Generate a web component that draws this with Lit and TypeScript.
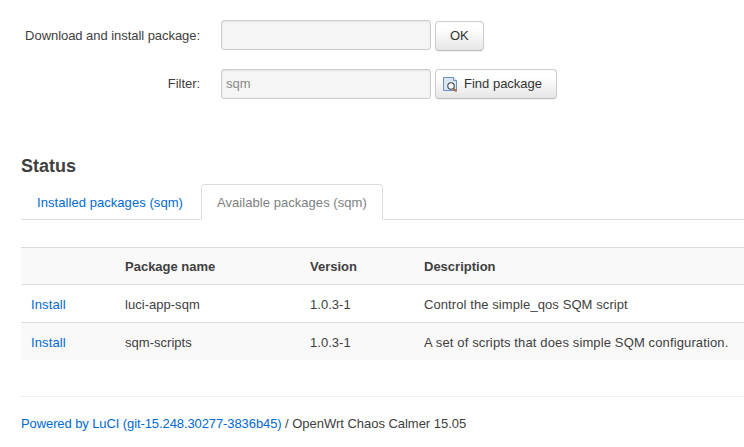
import { LitElement, html, css } from "lit";
import { customElement } from "lit/decorators.js";

const rows = [
  ["luci-app-sqm", "1.0.3-1", "Control the simple_qos SQM script"],
  ["sqm-scripts", "1.0.3-1", "A set of scripts that does simple SQM configuration."],
];

@customElement("app-root")
export class AppRoot extends LitElement {
  static styles = css`
    :host {
      display: block;
      width: 744px;
      height: 447px;
      overflow: hidden;
      background: #fff;
      box-sizing: border-box;
      padding: 20px 0 0 21px;
      font: 13px/18px "Liberation Sans", Arial, sans-serif;
      color: #404040;
    }
    a { color: #0069d6; text-decoration: none; }
    .form { display: grid; grid-template-columns: 179px 210px auto; column-gap: 21px; row-gap: 18px; justify-content: start; }
    .label { height: 30px; line-height: 30px; text-align: right; white-space: nowrap; letter-spacing: -0.05px; }
    .label.top { line-height: 32px; }
    .ctl { display: flex; gap: 4px; grid-column: 2 / 4; align-items: flex-start; }
    .input {
      box-sizing: border-box; width: 210px; height: 30px; padding: 0 4px; line-height: 28px;
      background: #f5f5f5; border: 1px solid #ccc; border-radius: 3px; color: #888;
      box-shadow: inset 0 1px 2px rgba(0,0,0,.08);
    }
    .btn {
      box-sizing: border-box; height: 30px; margin-top: 1px; padding: 0 14px; display: flex; align-items: center; gap: 6px;
      border: 1px solid #ccc; border-bottom-color: #bbb; border-radius: 4px; color: #333;
      background: linear-gradient(#fff, #fff 25%, #e6e6e6);
      box-shadow: inset 0 1px 0 rgba(255,255,255,.2), 0 1px 2px rgba(0,0,0,.05);
      white-space: nowrap;
    }
    .btn.find { margin-top: 0; padding: 0 14px 0 7px; height: 30px; }
    .btn svg { display: block; }
    h3 { margin: 57px 0 0; font-size: 18px; line-height: 20px; font-weight: bold; color: #404040; height: 28px; }
    .tabs { display: flex; height: 35px; border-bottom: 1px solid #ddd; }
    .tab { box-sizing: border-box; height: 36px; line-height: 37px; padding: 0 16px; white-space: nowrap; letter-spacing: 0.06px; }
    .tab.first { width: 180px; }
    .tab.active { color: #808080; background: #fff; border: 1px solid #ddd; border-bottom-color: #fff; border-radius: 4px 4px 0 0; line-height: 36px; width: 182px; padding: 0 15px; letter-spacing: 0.05px; }
    .table { margin-top: 27px; width: 723px; }
    .row { display: grid; grid-template-columns: 94px 185px 114px 330px; border-top: 1px solid #ddd; height: 37px; box-sizing: content-box; }
    .row.head { height: 36px; background: #f9f9f9; font-weight: bold; }
    .row.odd { background: #f9f9f9; }
    .c { padding-left: 10px; white-space: nowrap; line-height: 39px; letter-spacing: 0.03px; }
    .row.head .c { line-height: 38px; letter-spacing: 0; }
    .c a { letter-spacing: 0.12px; }
    .d0 { letter-spacing: 0.09px; }
    .d1 { letter-spacing: 0.13px; }
    .foot { margin-top: 36px; border-top: 1px solid #eee; width: 723px; padding-top: 18px; white-space: nowrap; letter-spacing: -0.03px; }
    .foot a { letter-spacing: -0.095px; }
  `;

  render() {
    return html`
      <div class="form">
        <div class="label top">Download and install package:</div>
        <div class="ctl"><div class="input"></div><div class="btn">OK</div></div>
        <div class="label">Filter:</div>
        <div class="ctl">
          <div class="input">sqm</div>
          <div class="btn find">
            <svg width="15" height="16" viewBox="0 0 15 16" fill="none">
              <path d="M.5 1.5h10l3 3v10H.5z" fill="#dbe6f3" stroke="#6a90bb"/>
              <path d="M10.5 1.5v3h3" fill="#fff" stroke="#6a90bb"/>
              <circle cx="8" cy="10" r="3.2" fill="#f4f7fb" stroke="#444" stroke-width="1.1"/>
              <path d="M10.5 12.5l3 3" stroke="#a8551a" stroke-width="1.6"/>
            </svg>
            <span>Find package</span>
          </div>
        </div>
      </div>
      <h3>Status</h3>
      <div class="tabs">
        <a class="tab first">Installed packages (sqm)</a>
        <div class="tab active">Available packages (sqm)</div>
      </div>
      <div class="table">
        <div class="row head"><div class="c"></div><div class="c">Package name</div><div class="c">Version</div><div class="c">Description</div></div>
        ${rows.map(
          (r, i) => html`<div class="row ${i % 2 ? "odd" : ""}">
            <div class="c"><a>Install</a></div><div class="c">${r[0]}</div><div class="c">${r[1]}</div><div class="c d${i}">${r[2]}</div>
          </div>`
        )}
      </div>
      <div class="foot"><a>Powered by LuCI (git-15.248.30277-3836b45)</a> / OpenWrt Chaos Calmer 15.05</div>
    `;
  }
}
